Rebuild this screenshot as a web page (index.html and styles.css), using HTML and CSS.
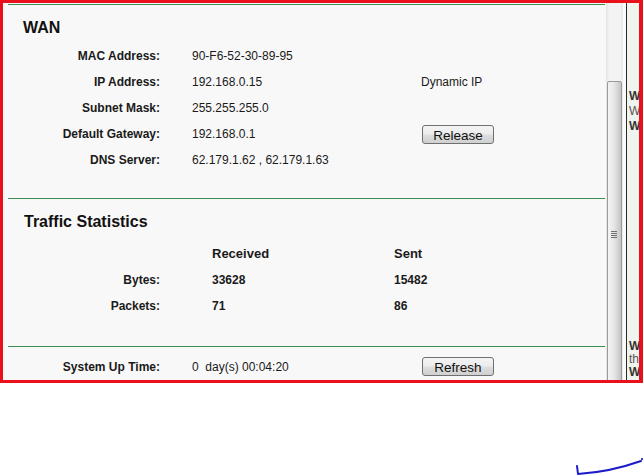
FILE: index.html
```html
<!DOCTYPE html>
<html lang="en">
<head>
<meta charset="utf-8">
<title>Status</title>
<link rel="stylesheet" href="styles.css">
</head>
<body>
<div class="frame">
  <main class="content">
    <div class="rule rule-top"></div>
    <h2 class="heading">WAN</h2>
    <div class="info">
      <div class="label">MAC Address:</div><div>90-F6-52-30-89-95</div><div></div>
      <div class="label">IP Address:</div><div>192.168.0.15</div><div class="extra">Dynamic IP</div>
      <div class="label">Subnet Mask:</div><div>255.255.255.0</div><div></div>
      <div class="label">Default Gateway:</div><div>192.168.0.1</div><div class="cell-btn"><button class="btn" type="button">Release</button></div>
      <div class="label">DNS Server:</div><div>62.179.1.62 , 62.179.1.63</div><div></div>
    </div>
    <div class="rule rule-mid"></div>
    <h2 class="heading heading-traffic">Traffic Statistics</h2>
    <div class="stats">
      <div></div><div class="col-head">Received</div><div class="col-head">Sent</div>
      <div class="label">Bytes:</div><div>33628</div><div>15482</div>
      <div class="label">Packets:</div><div>71</div><div>86</div>
    </div>
    <div class="rule rule-low"></div>
    <div class="uptime">
      <div class="label">System Up Time:</div><div>0&nbsp; day(s) 00:04:20</div><div><button class="btn" type="button">Refresh</button></div>
    </div>
  </main>
  <div class="scrollbar"><div class="thumb"><div class="grip"></div></div></div>
  <div class="gap"></div>
  <div class="divider"></div>
  <aside class="side">
    <div class="help help-top">
      <div class="strong">W</div>
      <div>W</div>
      <div class="strong">W</div>
    </div>
    <div class="help help-bottom">
      <div class="strong">W</div>
      <div>th</div>
      <div class="strong">W</div>
    </div>
  </aside>
</div>
<svg class="scribble" width="643" height="92" viewBox="0 0 643 92">
  <path d="M577 83 L578 91 Q610 89 641 78" fill="none" stroke="#1c1cc8" stroke-width="2" stroke-linecap="round" stroke-linejoin="round"/>
  <circle cx="642" cy="76" r="1.1" fill="#1c1cc8"/>
</svg>
</body>
</html>
```

FILE: styles.css
```css
html, body {
  margin: 0;
  padding: 0;
  background: #ffffff;
  overflow: hidden;
}

body {
  width: 643px;
  height: 475px;
  font-family: "Liberation Sans", Arial, sans-serif;
  color: #1a1a1a;
}

.frame {
  box-sizing: border-box;
  width: 643px;
  height: 383px;
  border-style: solid;
  border-color: #e8101a;
  border-width: 3px 4px 3px 3px;
  display: flex;
  overflow: hidden;
}

.content {
  width: 603px;
  flex: none;
  background: #f8f8f8;
  overflow: hidden;
}

.rule {
  height: 1px;
  background: #3a8f50;
  margin: 0 1px 0 5px;
}

.rule-top { margin-top: 1px; }
.rule-mid { margin-top: 25px; }
.rule-low { margin-top: 27px; }

.heading {
  margin: 13px 0 0 20px;
  font-size: 16px;
  line-height: 19px;
  font-weight: bold;
  color: #111;
}

.heading-traffic {
  margin-left: 21px;
}

.info {
  margin-top: 6px;
  display: grid;
  grid-template-columns: 189px 229px 1fr;
  grid-auto-rows: 26px;
  line-height: 26px;
  font-size: 12px;
}

.label {
  text-align: right;
  padding-right: 32px;
  font-weight: bold;
}

.cell-btn {
  display: flex;
  align-items: center;
}

.btn {
  display: block;
  width: 72px;
  height: 19px;
  box-sizing: border-box;
  margin: 0 0 0 1px;
  padding: 2px 0 0;
  border: 1px solid #707070;
  border-radius: 3px;
  background: linear-gradient(#f4f4f4, #ececec 48%, #dedede 52%, #d0d0d0);
  font-family: "Liberation Sans", Arial, sans-serif;
  font-size: 13.5px;
  line-height: 15px;
  color: #111;
}

.stats {
  margin-top: 10px;
  display: grid;
  grid-template-columns: 209px 182px 1fr;
  grid-auto-rows: 26px;
  line-height: 26px;
  font-size: 12px;
  font-weight: bold;
}

.stats .label {
  padding-right: 52px;
}

.stats .col-head {
  font-size: 13px;
}

.uptime {
  margin-top: 10px;
  height: 19px;
  display: grid;
  grid-template-columns: 189px 229px 1fr;
  align-items: center;
  font-size: 12px;
}

.scrollbar {
  width: 17px;
  flex: none;
  overflow: hidden;
  background: linear-gradient(to right, #e4e4e4, #f3f3f3 20%, #f3f3f3 80%, #e8e8e8);
}

.thumb {
  margin: 78px 1px 0;
  height: 400px;
  box-sizing: border-box;
  border: 1px solid #9a9a9a;
  border-radius: 2px 2px 0 0;
  background: linear-gradient(to right, #f3f3f3, #e7e7e7 45%, #d7d7d7 70%, #c3c3c3);
  padding-top: 149px;
}

.grip {
  width: 6px;
  height: 8px;
  margin-left: 3px;
  background: repeating-linear-gradient(#707070 0 1px, transparent 1px 2px);
}

.gap {
  width: 3px;
  flex: none;
  background: #fafafa;
}

.divider {
  width: 1px;
  flex: none;
  background: #2a2a2a;
}

.side {
  flex: 1;
  min-width: 0;
  overflow: hidden;
  background: #eff4ee;
  padding-left: 2px;
  font-size: 12px;
  white-space: nowrap;
  color: #555;
}

.help-top {
  margin-top: 86px;
  line-height: 15px;
}

.help-bottom {
  margin-top: 206px;
  line-height: 13px;
}

.strong {
  font-weight: bold;
  color: #333;
}

.scribble {
  display: block;
}
```
